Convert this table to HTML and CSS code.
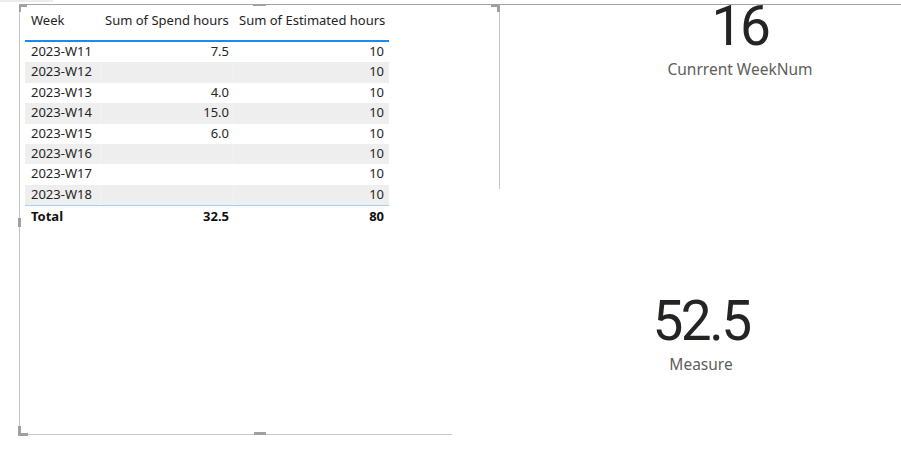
FILE: index.html
```html
<!DOCTYPE html>
<html lang="en">
<head>
<meta charset="utf-8">
<title>Report</title>
<link rel="stylesheet" href="styles.css">
</head>
<body>
<div class="canvas">
  <div class="strip"></div>
  <div class="topline"></div>

  <section class="visual table-visual">
    <table class="matrix">
      <colgroup><col class="c1"><col class="c2"><col class="c3"></colgroup>
      <thead>
        <tr><th class="left">Week</th><th class="left">Sum of Spend hours</th><th class="left">Sum of Estimated hours</th></tr>
      </thead>
      <tbody>
        <tr><td>2023-W11</td><td class="num">7.5</td><td class="num">10</td></tr>
        <tr class="alt"><td>2023-W12</td><td class="num"></td><td class="num">10</td></tr>
        <tr><td>2023-W13</td><td class="num">4.0</td><td class="num">10</td></tr>
        <tr class="alt"><td>2023-W14</td><td class="num">15.0</td><td class="num">10</td></tr>
        <tr><td>2023-W15</td><td class="num">6.0</td><td class="num">10</td></tr>
        <tr class="alt"><td>2023-W16</td><td class="num"></td><td class="num">10</td></tr>
        <tr><td>2023-W17</td><td class="num"></td><td class="num">10</td></tr>
        <tr class="alt"><td>2023-W18</td><td class="num"></td><td class="num">10</td></tr>
      </tbody>
      <tfoot>
        <tr><td>Total</td><td class="num">32.5</td><td class="num">80</td></tr>
      </tfoot>
    </table>
  </section>

  <div class="frame-left"></div>
  <div class="frame-bottom"></div>
  <div class="frame-right"></div>
  <div class="h h-tl-a"></div><div class="h h-tl-b"></div>
  <div class="h h-tr-a"></div><div class="h h-tr-b"></div>
  <div class="h h-bl-a"></div><div class="h h-bl-b"></div>
  <div class="h h-top"></div>
  <div class="h h-bottom"></div>
  <div class="h h-left"></div>

  <section class="visual card card-week">
    <div class="card-value">16</div>
    <div class="card-label">Cunrrent WeekNum</div>
  </section>

  <section class="visual card card-measure">
    <div class="card-value">52.5</div>
    <div class="card-label">Measure</div>
  </section>
</div>
</body>
</html>
```
FILE: styles.css
```css
html, body {
  margin: 0;
  padding: 0;
  background: #ffffff;
}
.canvas {
  position: relative;
  width: 901px;
  height: 458px;
  overflow: hidden;
  background: #ffffff;
  font-family: "Noto Sans", "Open Sans", sans-serif;
  color: #252423;
}
.strip {
  position: absolute;
  left: 0; top: 0;
  width: 53px; height: 2px;
  background: #ececec;
}
.topline {
  position: absolute;
  left: 19px; right: 0; top: 4px;
  height: 1px;
  background: #a3a3a3;
}
.visual { position: absolute; }

/* table visual */
.table-visual {
  left: 25px;
  top: 8px;
}
.matrix {
  border-collapse: separate;
  border-spacing: 0;
  table-layout: fixed;
  width: 364px;
  font-size: 13px;
}
.c1 { width: 75px; }
.c2 { width: 133px; }
.c3 { width: 156px; }
.matrix th {
  font-weight: 400;
  text-align: left;
  line-height: 17px;
  padding: 3.5px 4px 11.5px 6px;
  white-space: nowrap;
  border-bottom: 2px solid #1a8cf0;
  color: #252423;
}
.matrix th + th { padding-left: 5px; }
.matrix th:last-child { padding-left: 6px; }
.matrix tbody tr { height: 20.375px; }
.matrix td {
  line-height: 18px;
  padding: 0 5px 0 6px;
  vertical-align: top;
  white-space: nowrap;
}
.matrix td.num { text-align: right; padding-right: 4px; }
.matrix td:last-child.num { padding-right: 5px; }
.matrix tbody tr.alt td {
  background: #eeeeee;
}
.matrix tbody tr.alt td + td {
  border-left: 1px solid #f3f3f3;
}
.matrix tfoot td {
  font-weight: 700;
  color: #111111;
  border-top: 1px solid #a9d1f5;
  padding-top: 1px;
  height: 19px;
}

/* selection frame (overlay) */
.frame-left {
  position: absolute;
  left: 19px; top: 5px;
  width: 1px; height: 430px;
  background: #c6c6c6;
}
.frame-bottom {
  position: absolute;
  left: 19px; top: 434px;
  width: 433px; height: 1px;
  background: #c6c6c6;
}
.frame-right {
  position: absolute;
  left: 499px; top: 4px;
  width: 1px; height: 185px;
  background: #c6c6c6;
}
.h {
  position: absolute;
  background: #a0a0a0;
}
.h-tl-a { left: 19px; top: 5px; width: 8px; height: 2px; }
.h-tl-b { left: 19px; top: 5px; width: 2px; height: 7px; }
.h-tr-a { left: 491px; top: 4px; width: 9px; height: 3px; }
.h-tr-b { left: 497px; top: 4px; width: 3px; height: 8px; }
.h-bl-a { left: 18px; top: 426px; width: 3px; height: 10px; }
.h-bl-b { left: 18px; top: 433px; width: 10px; height: 3px; }
.h-top { left: 253px; top: 4px; width: 13px; height: 2px; }
.h-bottom { left: 254px; top: 432px; width: 12px; height: 3px; }
.h-left { left: 18px; top: 218px; width: 3px; height: 9px; }

/* cards */
.card {
  width: 300px;
  display: flex;
  flex-direction: column;
  align-items: center;
}
.card-week { left: 590px; top: -1px; }
.card-measure { left: 551px; top: 294px; }
.card-value {
  font-family: Roboto, "DejaVu Sans", sans-serif;
  font-size: 55px;
  line-height: 55px;
  letter-spacing: -2.5px;
  color: #252423;
}
.card-label {
  margin-top: 4.5px;
  font-size: 15.5px;
  line-height: 20px;
  color: #605e5c;
}
```
